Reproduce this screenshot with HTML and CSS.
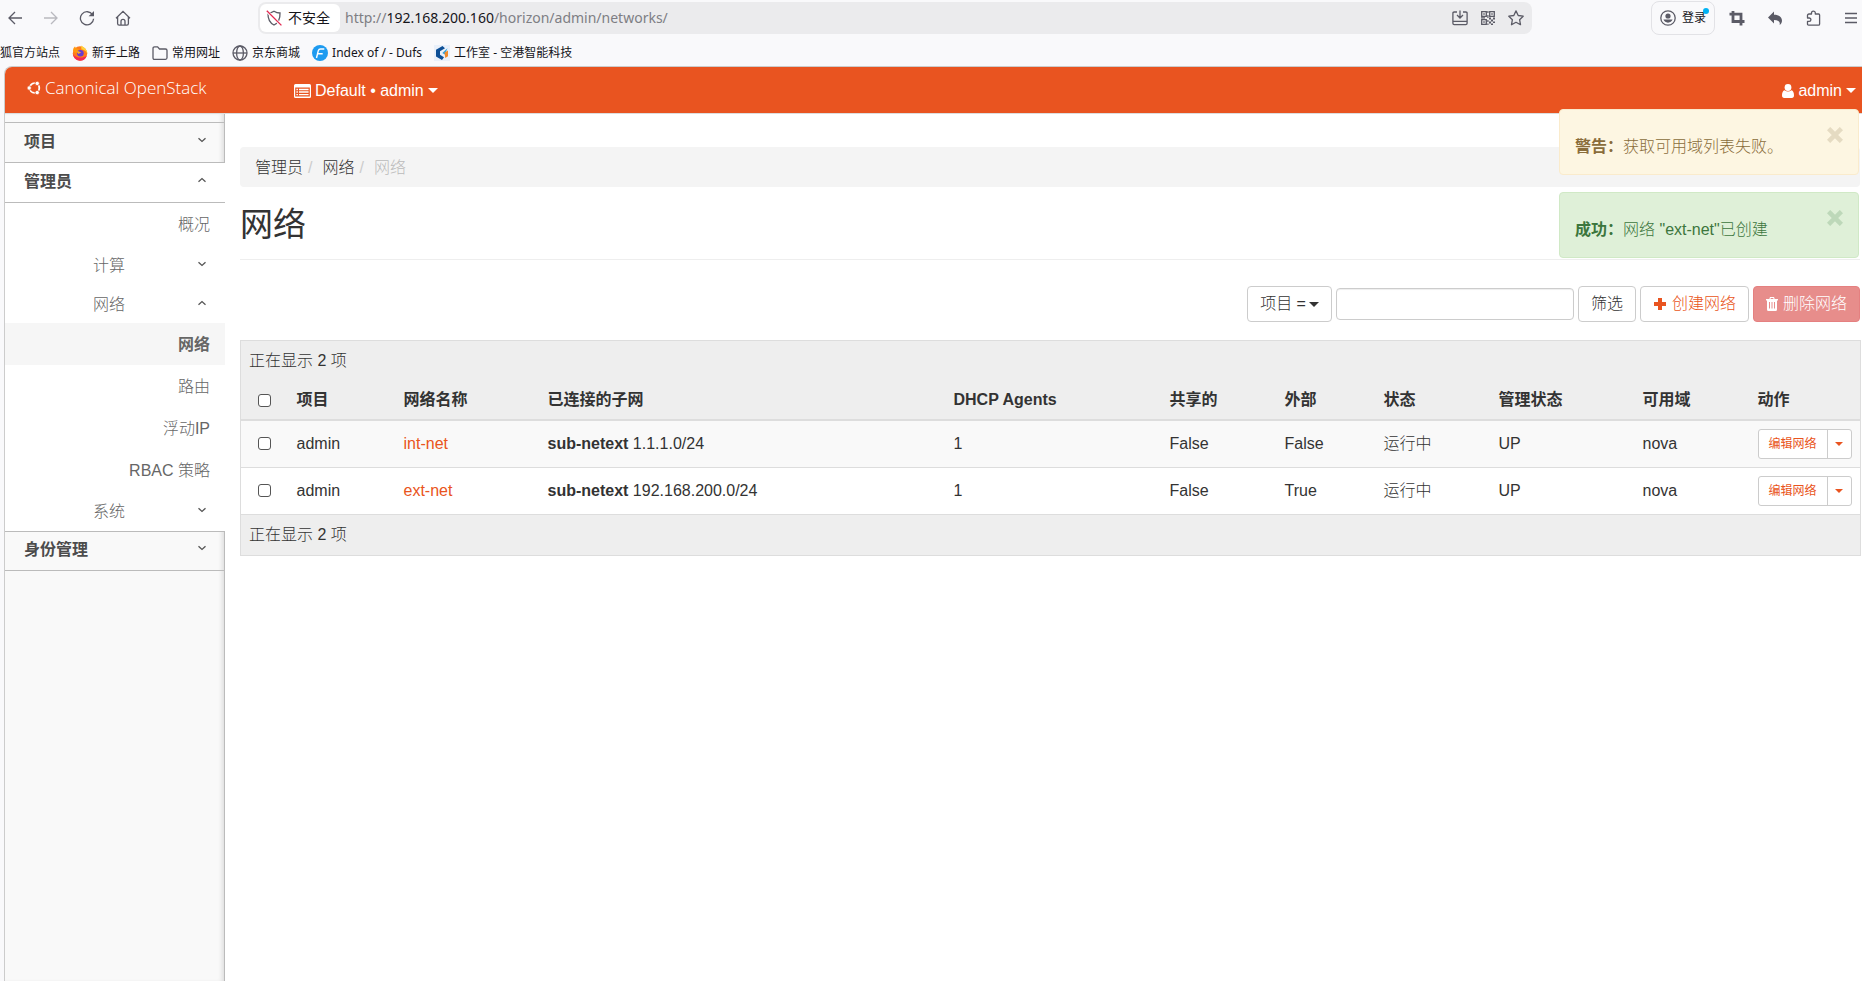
FILE: index.html
```html
<!DOCTYPE html>
<html lang="zh-CN">
<head>
<meta charset="utf-8">
<meta name="viewport" content="width=device-width, initial-scale=1">
<title>网络 - OpenStack Dashboard</title>
<link rel="stylesheet" href="styles.css">
</head>
<body>
<svg class="sprite" aria-hidden="true">
  <symbol id="chev-down" viewBox="0 0 10 6"><path d="M1.5 1.2 5 4.4 8.500 1.200" fill="none" stroke="currentColor" stroke-width="1.300"/></symbol>
  <symbol id="chev-up" viewBox="0 0 10 6"><path d="M1.500 4.800 5 1.600 8.500 4.800" fill="none" stroke="currentColor" stroke-width="1.300"/></symbol>
  <symbol id="caret" viewBox="0 0 10 5"><path d="M0 0h10L5 5z" fill="currentColor"/></symbol>
  <symbol id="times" viewBox="0 0 16 16"><path d="M3.200 3.200 12.800 12.800M12.800 3.200 3.200 12.800" fill="none" stroke="currentColor" stroke-width="4.600" stroke-linecap="square" stroke-linejoin="round"/></symbol>
</svg>

<div class="browser">
  <div class="toolbar">
    <div class="nav-buttons">
      <button class="icon-btn" aria-label="后退"><svg viewBox="0 0 16 16"><path d="M15 8H2M8 2 2 8l6 6"/></svg></button>
      <button class="icon-btn faded" aria-label="前进" disabled><svg viewBox="0 0 16 16"><path d="M1 8h13M8 2l6 6-6 6"/></svg></button>
      <button class="icon-btn" aria-label="刷新"><svg viewBox="0 0 16 16"><path d="M13.600 4.800A6.600 6.600 0 1 0 14.600 8.800"/><path d="M15 1v5.300H9.600z" class="solid"/></svg></button>
      <button class="icon-btn" aria-label="主页"><svg viewBox="0 0 16 16"><path d="M1 8.200 8 1.400l7 6.800M2.600 7v6.600q0 1.600 1.600 1.600h7.600q1.600 0 1.600-1.600V7M6 15v-3.600a2 2 0 0 1 4 0V15"/></svg></button>
    </div>
    <div class="urlbar">
      <button class="identity"><svg viewBox="0 0 16 16"><path d="M8 1.200c2 1.300 4 1.800 6 1.800 .2 5.200-1 9.500-6 12C3 12.500 1.800 8.200 2 3c2 0 4-.5 6-1.800z"/><path d="M.8 1l14.600 14.600" class="slash-gap"/><path d="M.8 .8 15.400 15.400" class="slash"/></svg>不安全</button>
      <div class="url" role="textbox" aria-label="地址" contenteditable="true" spellcheck="false">http://<span class="host">192.168.200.160</span>/horizon/admin/networks/</div>
      <div class="url-actions">
        <button class="icon-btn" aria-label="安装"><svg viewBox="0 0 16 16"><path d="M5 2H2.200Q.9 2 .9 3.300v9.900q0 1.400 1.300 1.400h11.600q1.300 0 1.300-1.400V3.300Q15.100 2 13.800 2H11M1 11.300h14M8 .5v7M5 5l3 3 3-3"/></svg></button>
        <button class="icon-btn" aria-label="二维码"><svg viewBox="0 0 14 14" class="qr"><path d="M.7.7h4.600v4.600H.7zM8.700.7h4.600v4.600H8.700zM.7 8.700h4.600v4.600H.7z"/><path class="solid dots" d="M2.300 2.300h1.400v1.400H2.300zM10.300 2.300h1.400v1.400h-1.400zM2.300 10.300h1.400v1.400H2.300zM6.300 0h1.200v2H6.300zM6.300 4h1.200v3H6.300zM0 6.300h4v1.200H0zM8 6.400h2v2H8zM10 8.400h2v2h-2zM12 6.400h2v2h-2zM8 10.400h2v2H8zM12 10.400h2v1.600h-2zM10 12.400h2V14h-2zM6.300 9h1.200v2H6.300zM6.300 12.400h1.200V14H6.300z"/></svg></button>
        <button class="icon-btn" aria-label="收藏"><svg viewBox="0 0 16 16"><path d="M8 .9l2.200 4.600 5 .7-3.600 3.500.9 5L8 12.300l-4.500 2.400.9-5L.8 6.200l5-.7z" stroke-linejoin="round"/></svg></button>
      </div>
    </div>
    <div class="tools">
      <button class="login"><svg viewBox="0 0 16 16"><circle cx="8" cy="8" r="7.200"/><circle cx="8" cy="6" r="2.600" class="solid"/><path class="solid" d="M3.400 9.600h9.200a5 5 0 0 1-9.200 0z"/></svg>登录<span class="dot"></span></button>
      <button class="icon-btn" aria-label="截图"><svg viewBox="0 0 16 16"><path stroke-width="2.800" d="M4 1v10.500h11.500M.5 4.200H12V15.500"/></svg></button>
      <button class="icon-btn" aria-label="撤销"><svg viewBox="0 0 16 16"><path class="solid" d="M7 1.500v3.300c5 0 8 2.200 8 6 0 1.900-1 3.300-2.400 4.200.8-3.300-1-5-5.600-5v3.500L1 7.600z"/></svg></button>
      <button class="icon-btn" aria-label="扩展"><svg viewBox="0 0 16 16"><path stroke-linejoin="round" d="M2.500 5.500Q2.500 4 4 4h2.500V3a1.800 1.800 0 0 1 3.800 0v1h3.300q1 0 1 1v9q0 1.200-1.200 1.200H3.700q-1.200 0-1.200-1.200v-2.600H4.200a1.700 1.700 0 0 0 0-3.400H2.500z"/></svg></button>
      <button class="icon-btn" aria-label="菜单"><svg viewBox="0 0 16 16"><path d="M2 3.500h12M2 8h12M2 12.500h12"/></svg></button>
    </div>
  </div>
  <nav class="bookmarks" aria-label="书签">
    <a href="#">狐官方站点</a>
    <a href="#"><svg viewBox="0 0 16 16"><circle cx="8" cy="8.500" r="7.200" fill="#ff7a1a"/><path d="M9 .5c3 1.500 6.600 4.500 6.400 8.500C14 5 11.500 5 9.500 4.500z" fill="#ffd23a"/><path d="M1 6C1 3 2.500 2 3 1.500c.5 1.500 2 2.300 4 2.500L4 8.500z" fill="#ff980e"/><path d="M1 9c.3 4 3.600 6.700 7 6.700s6-2 6.800-5C12 13 4 14 1 9z" fill="#f32b55"/><circle cx="8.400" cy="8.300" r="3.300" fill="#6a3bd0"/><path d="M4.500 6.500c2-1 3 .3 4.500.5-.5 1.500-2 1-2.500 2z" fill="#ffb21a"/></svg>新手上路</a>
    <a href="#"><svg viewBox="0 0 16 16" class="line"><path d="M1 12.800V3.500Q1 1.900 2.600 1.900h3L7.500 4h6q1.500 0 1.500 1.600v7.200q0 1.500-1.500 1.500h-11Q1 14.300 1 12.800z"/></svg>常用网址</a>
    <a href="#"><svg viewBox="0 0 16 16" class="line"><circle cx="8" cy="8" r="7"/><ellipse cx="8" cy="8" rx="3.400" ry="7"/><path d="M1 8h14"/></svg>京东商城</a>
    <a href="#"><svg viewBox="0 0 16 16"><circle cx="8" cy="8" r="8" fill="#1e9bf0"/><path d="M4.500 13 6.300 5.700Q6.800 4 8.600 4h3.700M5.700 8.800h5" fill="none" stroke="#fff" stroke-width="1.400"/></svg>Index of / - Dufs</a>
    <a href="#"><svg viewBox="0 0 16 16"><path d="M0 0h16v16H0z" fill="#e9f0fa"/><path d="M8.500 1 2 4.700v6.800L8 15l2-2.800-4-2.500V6.300l5-3z" fill="#0d4f96"/><path d="M13.500 3.300 8.300 8l2.500 1.500z" fill="#2aa0dd"/><path d="m10.500 7.500 3.500-2v5.800L11.300 13z" fill="#f08a2c"/></svg>工作室 - 空港智能科技</a>
  </nav>
</div>

<div class="page">
  <header class="topbar">
    <a class="brand" href="#"><svg viewBox="0 0 14 14"><circle cx="7.500" cy="7" r="4.800" fill="none" stroke="#fff" stroke-width="1.800"/><g fill="#fff" stroke="#e95420" stroke-width=".8"><circle cx="2.200" cy="7" r="2.200"/><circle cx="10.200" cy="2.400" r="2.200"/><circle cx="10.200" cy="11.600" r="2.200"/></g></svg>Canonical OpenStack</a>
    <button class="context"><svg class="list" viewBox="0 0 17 14"><path fill="#fff" fill-rule="evenodd" d="M1.500 0h14Q17 0 17 1.500v11q0 1.500-1.500 1.500h-14Q0 14 0 12.500v-11Q0 0 1.500 0zM1.200 3.600v9h14.600v-9z"/><path fill="#fff" d="M2.400 4.800h1.500v1.400H2.400zM5 4.800h9.600v1.400H5zM2.400 7.300h1.500v1.400H2.400zM5 7.300h9.600v1.400H5zM2.400 9.900h1.500v1.400H2.400zM5 9.900h9.600v1.400H5z"/></svg>Default • admin<svg class="caret"><use href="#caret"/></svg></button>
    <button class="user"><svg class="person" viewBox="0 0 12 14"><circle cx="6" cy="3.500" r="3.400" fill="#fff"/><path fill="#fff" d="M2.600 6.200Q0 7 0 11.300 0 14 2.200 14h7.600Q12 14 12 11.300 12 7 9.400 6.200 6 9 2.600 6.200z"/></svg>admin<svg class="caret"><use href="#caret"/></svg></button>
  </header>

  <div class="body">
    <nav class="sidebar" aria-label="主导航">
      <button class="panel">项目<svg><use href="#chev-down"/></svg></button>
      <div class="open">
        <button class="panel">管理员<svg><use href="#chev-up"/></svg></button>
        <div class="group">
          <a class="leaf" href="#">概况</a>
          <button class="sub">计算<svg><use href="#chev-down"/></svg></button>
          <button class="sub">网络<svg><use href="#chev-up"/></svg></button>
          <a class="leaf active" href="#">网络</a>
          <a class="leaf" href="#">路由</a>
          <a class="leaf" href="#">浮动IP</a>
          <a class="leaf" href="#">RBAC 策略</a>
          <button class="sub">系统<svg><use href="#chev-down"/></svg></button>
        </div>
      </div>
      <button class="panel last">身份管理<svg><use href="#chev-down"/></svg></button>
    </nav>

    <main class="main">
      <ol class="breadcrumb"><li><a href="#">管理员</a></li><li><a href="#">网络</a></li><li class="current">网络</li></ol>
      <h1>网络</h1>

      <form class="actions">
        <button type="button" class="btn compact">项目 =<svg class="caret"><use href="#caret"/></svg></button>
        <input class="filter" type="text" aria-label="筛选条件">
        <button type="button" class="btn">筛选</button>
        <button type="button" class="btn create"><svg class="plus" viewBox="0 0 14 14"><path d="M5 1h4v4h4v4H9v4H5V9H1V5h4z" fill="currentColor"/></svg>创建网络</button>
        <button type="button" class="btn danger" disabled><svg class="trash" viewBox="0 0 12 14"><path fill="currentColor" fill-rule="evenodd" d="M0 2h3.300L4 0h4l.7 2H12v1.500h-1v9Q11 14 9.600 14H2.400Q1 14 1 12.500v-9H0zM4.500 2h3l-.3-.9H4.800zM3 5v6.500h1V5zM5.500 5v6.500h1V5zM8 5v6.500h1V5z"/></svg>删除网络</button>
      </form>

      <table class="grid">
        <colgroup><col class="c-check"><col class="c-project"><col class="c-name"><col class="c-subnet"><col class="c-dhcp"><col class="c-flag"><col class="c-ext"><col class="c-flag"><col class="c-name"><col class="c-flag"><col class="c-act"></colgroup>
        <thead>
          <tr class="count"><td colspan="11">正在显示 2 项</td></tr>
          <tr><th><input type="checkbox" aria-label="全选"></th><th>项目</th><th>网络名称</th><th>已连接的子网</th><th>DHCP Agents</th><th>共享的</th><th>外部</th><th>状态</th><th>管理状态</th><th>可用域</th><th>动作</th></tr>
        </thead>
        <tbody>
          <tr><td><input type="checkbox" aria-label="选择 int-net"></td><td>admin</td><td><a href="#">int-net</a></td><td><b>sub-netext</b> 1.1.1.0/24</td><td>1</td><td>False</td><td>False</td><td>运行中</td><td>UP</td><td>nova</td><td><div class="split"><button>编辑网络</button><button aria-label="更多操作"><svg class="caret"><use href="#caret"/></svg></button></div></td></tr>
          <tr><td><input type="checkbox" aria-label="选择 ext-net"></td><td>admin</td><td><a href="#">ext-net</a></td><td><b>sub-netext</b> 192.168.200.0/24</td><td>1</td><td>False</td><td>True</td><td>运行中</td><td>UP</td><td>nova</td><td><div class="split"><button>编辑网络</button><button aria-label="更多操作"><svg class="caret"><use href="#caret"/></svg></button></div></td></tr>
        </tbody>
        <tfoot><tr class="count"><td colspan="11">正在显示 2 项</td></tr></tfoot>
      </table>
    </main>
  </div>

  <div class="messages">
    <div class="alert warning" role="alert"><p><strong>警告：</strong>获取可用域列表失败。</p><button aria-label="关闭"><svg><use href="#times"/></svg></button></div>
    <div class="alert success" role="alert"><p><strong>成功：</strong>网络 "ext-net"已创建</p><button aria-label="关闭"><svg><use href="#times"/></svg></button></div>
  </div>
</div>
</body>
</html>
```
FILE: styles.css
```css
* { box-sizing: border-box; }

body {
  margin: 0;
  height: 100vh;
  display: flex;
  flex-direction: column;
  overflow: hidden;
  background: #f9f9fb;
  color: #333;
  font: 300 16px/24px "Liberation Sans", "Noto Sans CJK SC", sans-serif;
}

button, input { font: inherit; color: inherit; }
button { margin: 0; padding: 0; border: 0; background: none; cursor: pointer; white-space: nowrap; }
a { color: inherit; text-decoration: none; }
b, strong { font-weight: 700; }
svg { flex: none; }
.sprite { position: absolute; width: 0; height: 0; }
.caret { width: 10px; height: 5px; }

/* Browser chrome */
.browser {
  flex: none;
  height: 66px;
  color: #15141a;
  font: 400 12px/16px "Noto Sans", "Noto Sans CJK SC", sans-serif;
}
.toolbar { display: flex; height: 36px; padding-top: 2px; }
.nav-buttons { display: flex; gap: 20px; width: 258px; height: 32px; padding-left: 7px; align-items: center; }
.icon-btn { display: flex; width: 16px; height: 16px; color: #5b5b66; }
.icon-btn svg, .identity svg, .login svg, .line { width: 16px; height: 16px; fill: none; stroke: #5b5b66; stroke-width: 1.3; }
.toolbar .solid { fill: #5b5b66; stroke: none; }
.faded { opacity: .4; }
.urlbar {
  flex: 1;
  display: flex;
  align-items: center;
  height: 32px;
  padding: 0 8px 0 2px;
  border-radius: 8px;
  background: #ebebed;
}
.identity {
  display: flex;
  align-items: center;
  gap: 6px;
  height: 28px;
  padding: 0 10px 0 6px;
  border-radius: 6px;
  background: #fff;
  font-size: 14px;
}
.identity .slash { stroke: #e22850; }
.identity .slash-gap { stroke: #fff; stroke-width: 3; }
.url { flex: 1; margin-left: 5px; color: #7e7e84; font-size: 14px; line-height: 20px; white-space: nowrap; outline: 0; }
.host { color: #15141a; }
.url-actions { display: flex; gap: 12px; }
.icon-btn .qr { width: 14px; height: 14px; margin: 1px; }
.tools { display: flex; align-items: center; gap: 22px; height: 32px; padding: 0 3px 0 119px; }
.login {
  position: relative;
  display: flex;
  align-items: center;
  gap: 6px;
  height: 34px;
  margin-right: -8px;
  padding: 0 8px;
  border: 1px solid #e2e2e6;
  border-radius: 8px;
}
.dot { position: absolute; top: 6px; right: 5px; width: 6px; height: 6px; border-radius: 50%; background: #00b3f4; }
.bookmarks { display: flex; gap: 12px; height: 30px; padding-top: 9px; }
.bookmarks a { display: flex; gap: 4px; height: 16px; white-space: nowrap; }
.bookmarks svg { width: 16px; height: 16px; }

/* Dashboard frame */
.page {
  position: relative;
  flex: 1;
  min-height: 0;
  display: flex;
  flex-direction: column;
  margin-left: 4px;
  border: 1px solid #ccc;
  border-width: 1px 0 0 1px;
  border-radius: 8px 0 0 0;
  background: #fff;
}
.topbar {
  flex: none;
  display: flex;
  align-items: center;
  height: 47px;
  padding: 0 6px 0 22px;
  border-bottom: 1px solid #ddd;
  border-radius: 7px 0 0 0;
  background: #e95420;
  color: #fff;
}
.brand { display: flex; align-items: center; gap: 4px; width: 267px; padding-bottom: 4px; font: 300 17px/24px "Open Sans", sans-serif; }
.brand svg { width: 14px; height: 14px; }
.context, .user { display: flex; align-items: center; gap: 4px; padding-top: 1px; }
.list { width: 17px; height: 14px; }
.person { width: 12px; height: 14px; }
.user { margin-left: auto; }
.body { flex: 1; min-height: 0; display: flex; }

/* Sidebar */
.sidebar {
  flex: none;
  width: 220px;
  padding-top: 8px;
  border-right: 1px solid #bbb;
  background: #f9f9f9;
  box-shadow: inset -4px 0 4px -2px #ddd;
  color: #666;
}
.sidebar svg { width: 10px; height: 6px; margin-bottom: 4px; color: #555; }
.panel, .sub { display: flex; align-items: center; justify-content: space-between; width: 100%; padding-right: 17px; }
.panel { height: 40px; padding-left: 19px; padding-bottom: 2px; border-top: 1px solid #bbb; color: #4c4c4c; font-weight: 700; }
.last { border-bottom: 1px solid #bbb; }
.open { margin-right: -1px; padding-right: 1px; background: #fff; }
.group { margin-right: -1px; padding-bottom: 1px; border-top: 1px solid #bbb; }
.open .panel { width: 220px; padding-right: 18px; }
.sub { height: 39px; padding-top: 2px; padding-left: 88px; padding-right: 18px; }
.leaf { display: block; padding: 10px 15px 8px; text-align: right; }
.active { background: #f6f6f6; font-weight: 700; }

/* Content */
.main { flex: 1; min-width: 0; padding: 33px 2px 0 15px; }
.breadcrumb {
  display: flex;
  margin: 0;
  padding: 9px 15px 7px;
  border-radius: 4px;
  background: #f4f4f4;
  list-style: none;
}
.breadcrumb li + li::before { content: "/"; padding: 0 10px 0 5px; color: #ccc; }
.breadcrumb .current { color: #bbb; }
h1 { margin: 0; padding: 13px 0 9px; border-bottom: 1px solid #eee; font-size: 33px; font-weight: 400; line-height: 50px; }
.actions { display: flex; align-items: center; justify-content: flex-end; gap: 4px; margin: 26px 0 18px; }
.btn {
  display: flex;
  align-items: center;
  gap: 5px;
  height: 36px;
  padding: 0 12px;
  border: 1px solid #ccc;
  border-radius: 4px;
  background: #fff;
}
.compact { gap: 3px; }
.filter { width: 238px; height: 32px; padding: 0 8px; border: 1px solid #ccc; border-radius: 4px; box-shadow: inset 0 1px 1px #eee; }
.create { color: #e95420; }
.danger { border-color: #e58080; background: #e78d8b; color: #fff; }
.plus { width: 14px; height: 14px; }
.trash { width: 12px; height: 14px; }

.grid { width: 100%; table-layout: fixed; border-collapse: collapse; border: 1px solid #ddd; }
.c-check { width: 48px; }
.c-project { width: 107px; }
.c-name { width: 144px; }
.c-subnet { width: 406px; }
.c-dhcp { width: 216px; }
.c-flag { width: 115px; }
.c-ext { width: 99px; }
.c-act { width: 111px; }
.grid th, .grid td { padding: 8px; text-align: left; vertical-align: middle; }
.grid th { padding-top: 7px; padding-bottom: 7px; font-weight: 700; }
.grid thead, .grid tfoot { background: #eee; }
.grid thead { border-bottom: 2px solid #ddd; }
.grid tbody tr { height: 47px; border-bottom: 1px solid #ddd; }
.grid tbody tr:nth-child(odd) { background: #f9f9f9; }
.grid tbody a { color: #e95420; }
.grid input {
  display: block;
  width: 13px;
  height: 13px;
  margin: 0 9px;
  border: 1px solid #555;
  border-radius: 3px;
  background: #fff;
  appearance: none;
}
.grid tbody td:last-child { padding-top: 0; padding-bottom: 0; }
.split { display: flex; width: 94px; height: 30px; border: 1px solid #ccc; border-radius: 3px; background: #fff; color: #e95420; font-size: 12px; font-weight: 400; }
.split button { flex: 1; }
.split button + button { flex: none; display: grid; place-items: center; width: 24px; border-left: 1px solid #ccc; }
.split .caret { width: 8px; height: 4px; }

/* Toast messages */
.messages { position: absolute; top: 42px; right: 3px; display: grid; gap: 17px; width: 300px; }
.alert { display: flex; justify-content: space-between; padding: 16px 15px 15px; border: 1px solid; border-radius: 4px; }
.alert p { margin: 9px 0 0; }
.alert button { width: 16px; height: 20px; }
.alert svg { width: 16px; height: 16px; }
.warning { border-color: #faebcc; background: #fdf6e2; color: #8a6d3b; }
.warning button { color: #e5dbc2; }
.success { border-color: #d0e9c6; background: #dff0d8; color: #3c763d; }
.success button { color: #bdd8b9; }
```
